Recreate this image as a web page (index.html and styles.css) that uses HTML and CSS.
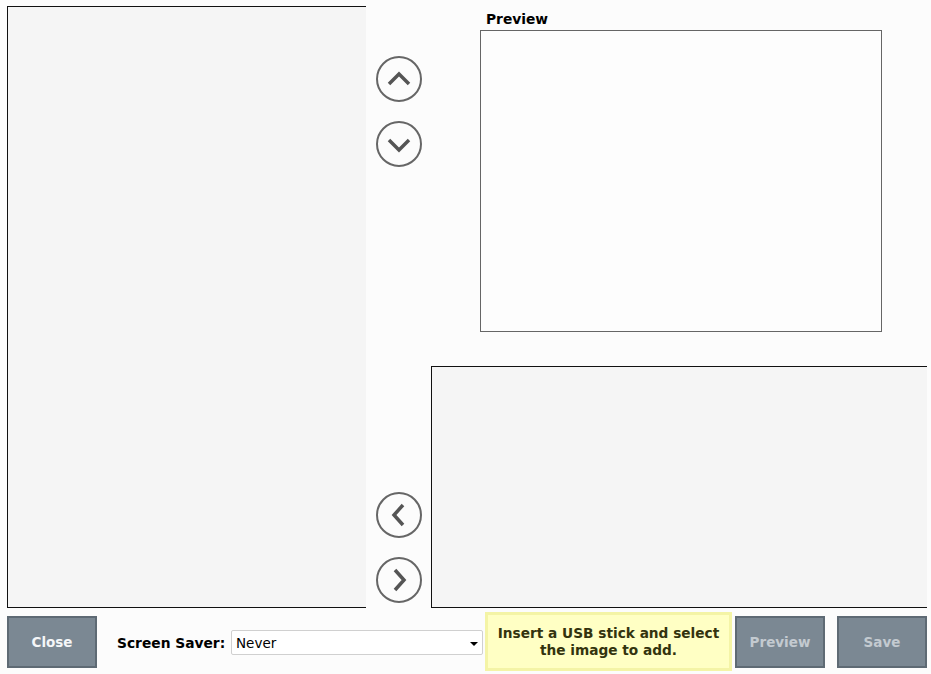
FILE: index.html
```html
<!DOCTYPE html>
<html>
<head>
<meta charset="utf-8">
<link rel="stylesheet" href="styles.css">
</head>
<body>
<div class="app">
  <div class="main">
    <div class="left-panel"></div>
    <div class="middle">
      <div class="btn-group top-group">
        <div class="circle-btn"><svg viewBox="0 0 46 46" width="46" height="46"><circle cx="23" cy="23" r="22" fill="none" stroke="#666" stroke-width="2"/><path d="M13 28 L23 18 L33 28" fill="none" stroke="#555" stroke-width="3.5"/></svg></div>
        <div class="circle-btn"><svg viewBox="0 0 46 46" width="46" height="46"><circle cx="23" cy="23" r="22" fill="none" stroke="#666" stroke-width="2"/><path d="M13 19 L23 29 L33 19" fill="none" stroke="#555" stroke-width="3.5"/></svg></div>
      </div>
      <div class="btn-group bottom-group">
        <div class="circle-btn"><svg viewBox="0 0 46 46" width="46" height="46"><circle cx="23" cy="23" r="22" fill="none" stroke="#666" stroke-width="2"/><path d="M27 13 L18 23 L27 33" fill="none" stroke="#555" stroke-width="3.5"/></svg></div>
        <div class="circle-btn"><svg viewBox="0 0 46 46" width="46" height="46"><circle cx="23" cy="23" r="22" fill="none" stroke="#666" stroke-width="2"/><path d="M19 13 L28 23 L19 33" fill="none" stroke="#555" stroke-width="3.5"/></svg></div>
      </div>
    </div>
    <div class="right">
      <div class="preview-section">
        <div class="preview-label">Preview</div>
        <div class="preview-box"></div>
      </div>
      <div class="bottom-panel"></div>
    </div>
  </div>
  <div class="toolbar">
    <div class="btn">Close</div>
    <div class="saver-label">Screen Saver:</div>
    <div class="select"><span>Never</span><span class="caret"></span></div>
    <div class="hint">Insert a USB stick and select<br>the image to add.</div>
    <div class="btn disabled">Preview</div>
    <div class="btn disabled save">Save</div>
  </div>
</div>
</body>
</html>
```
FILE: styles.css
```css
html, body {
  margin: 0;
  padding: 0;
  background: #fcfcfc;
  font-family: "DejaVu Sans", Verdana, sans-serif;
}
.app {
  width: 931px;
  height: 674px;
  padding: 6px 0 0 7px;
  box-sizing: border-box;
  overflow: hidden;
}
.main {
  display: flex;
  height: 602px;
}
.left-panel {
  width: 359px;
  box-sizing: border-box;
  background: #f5f5f5;
  border: 1px solid #111;
  border-right: none;
}
.middle {
  width: 65px;
  display: flex;
  flex-direction: column;
  justify-content: space-between;
}
.btn-group {
  display: flex;
  flex-direction: column;
  gap: 19px;
  padding-left: 10px;
}
.top-group { padding-top: 50px; }
.bottom-group { padding-bottom: 5px; }
.circle-btn {
  width: 46px;
  height: 46px;
}
.circle-btn svg { display: block; }
.right {
  width: 496px;
  display: flex;
  flex-direction: column;
}
.preview-section {
  padding-left: 49px;
  height: 360px;
}
.preview-label {
  font-size: 13.8px;
  font-weight: bold;
  color: #000;
  padding-left: 6px;
  padding-top: 5px;
  height: 19px;
  line-height: 16px;
}
.preview-box {
  width: 402px;
  height: 302px;
  box-sizing: border-box;
  border: 1px solid #666;
  background: #fdfdfd;
}
.bottom-panel {
  flex: 1;
  background: #f5f5f5;
  border: 1px solid #111;
  border-right: none;
}
.toolbar {
  display: flex;
  align-items: center;
  height: 66px;
}
.btn {
  width: 90px;
  height: 52px;
  box-sizing: border-box;
  background: #7b8893;
  border: 2px solid #5e6a74;
  color: #f4f6f8;
  font-size: 13.5px;
  font-weight: bold;
  display: flex;
  align-items: center;
  justify-content: center;
  margin-top: 2px;
}
.btn.disabled { color: #c3cad0; }
.saver-label {
  margin-left: 20px;
  font-size: 13.8px;
  font-weight: bold;
  color: #000;
  width: 114px;
  margin-top: 3px;
}
.select {
  width: 252px;
  height: 25px;
  box-sizing: border-box;
  border: 1px solid #d0d0d0;
  border-radius: 2px;
  background: #fff;
  display: flex;
  align-items: center;
  justify-content: space-between;
  padding: 0 4px 0 4px;
  font-size: 13.5px;
  color: #000;
  margin-top: 3px;
}
.caret {
  width: 0;
  height: 0;
  border-left: 4px solid transparent;
  border-right: 4px solid transparent;
  border-top: 4px solid #000;
  margin-top: 2px;
}
.hint {
  margin-left: 2px;
  width: 247px;
  height: 59px;
  box-sizing: border-box;
  background: #ffffc4;
  border: 3px solid #f4f4a6;
  color: #33330e;
  font-size: 13.7px;
  font-weight: bold;
  text-align: center;
  line-height: 17px;
  padding-top: 10px;
  margin-top: 1px;
}
.hint + .btn { margin-left: 3px; }
.btn.save { margin-left: 12px; }
```
